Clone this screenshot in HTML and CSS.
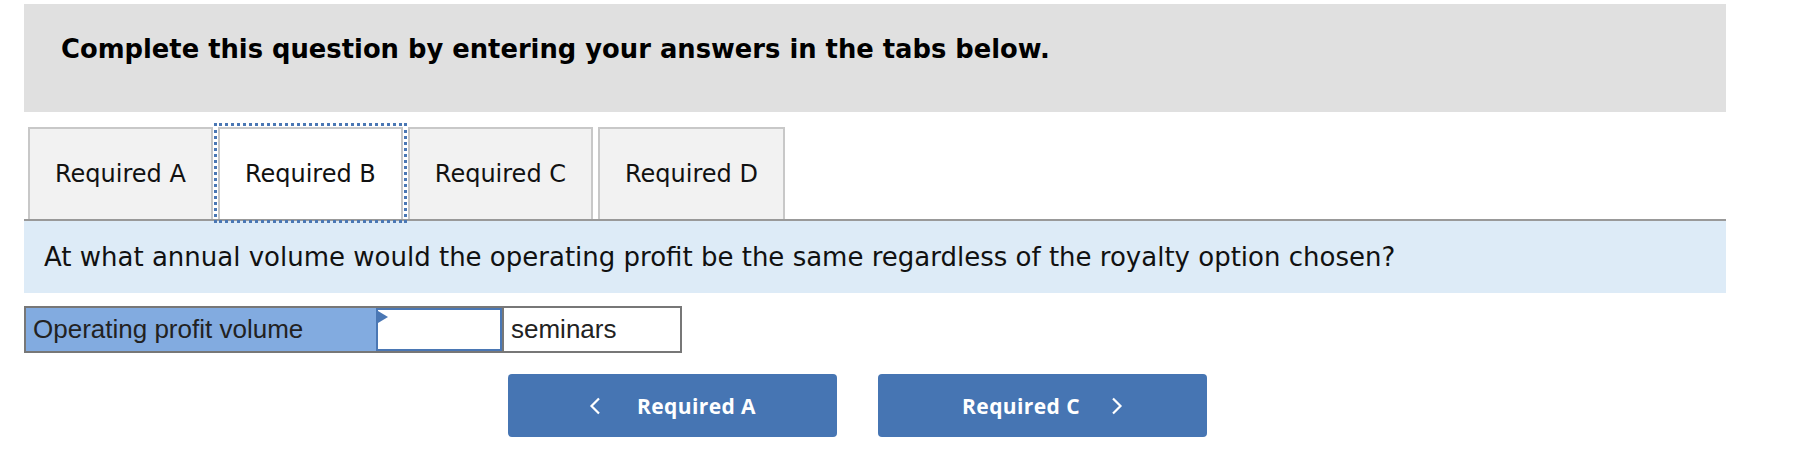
FILE: index.html
```html
<!DOCTYPE html>
<html lang="en">

<head>
    <meta charset="UTF-8">
    <meta name="viewport" content="width=device-width, initial-scale=1.0">
    <title>Required B</title>
    <link rel="stylesheet" href="styles.css">
</head>

<body>
    <div class="question-container">
        <div class="instructions">Complete this question by entering your answers in the tabs below.</div>

        <div class="tabs">
            <button class="tab">Required A</button>
            <button class="tab active">Required B</button>
            <button class="tab">Required C</button>
            <button class="tab">Required D</button>
        </div>

        <div class="prompt">At what annual volume would the operating profit be the same regardless of the royalty option chosen?</div>

        <div class="answer-row">
            <div class="answer-label">Operating profit volume</div>
            <div class="answer-input">
                <span class="flag"></span>
                <input type="text" aria-label="Operating profit volume">
            </div>
            <div class="answer-unit">seminars</div>
        </div>

        <div class="nav">
            <button class="nav-btn prev">
                <svg width="12" height="18" viewBox="0 0 12 18"><polyline points="10,1.5 2.5,9 10,16.5" /></svg>
                <span>Required A</span>
            </button>
            <button class="nav-btn next">
                <span>Required C</span>
                <svg width="12" height="18" viewBox="0 0 12 18"><polyline points="2,1.5 9.5,9 2,16.5" /></svg>
            </button>
        </div>
    </div>
</body>

</html>
```

FILE: styles.css
```css
body {
    margin: 0;
    padding: 4px 0 0 24px;
    background: #fff;
    font-family: "DejaVu Sans", Verdana, sans-serif;
    color: #111;
}

.question-container {
    width: 1702px;
}

.instructions {
    background-color: #e0e0e0;
    height: 108px;
    box-sizing: border-box;
    padding: 30px 37px 0;
    font-size: 25.8px;
    font-weight: bold;
    color: #000;
}

.tabs {
    display: flex;
    margin-top: 15px;
    padding-left: 4px;
    border-bottom: 2px solid #999;
}

.tab {
    height: 92px;
    box-sizing: border-box;
    padding: 0 25px;
    margin-right: 5px;
    background-color: #f2f2f2;
    border: 2px solid #c8c8c8;
    border-bottom: none;
    font-family: "DejaVu Sans", Verdana, sans-serif;
    font-size: 24px;
    color: #111;
    cursor: pointer;
}

.tab.active {
    background-color: #fff;
    outline: 3px dotted #4a77b4;
    outline-offset: 1px;
}

.prompt {
    background-color: #ddebf7;
    height: 72px;
    box-sizing: border-box;
    padding-left: 20px;
    display: flex;
    align-items: center;
    font-size: 26px;
}

.answer-row {
    display: flex;
    width: 658px;
    height: 47px;
    box-sizing: border-box;
    margin-top: 13px;
    border: 2px solid #777;
    font-family: "Liberation Sans", Arial, sans-serif;
    font-size: 26px;
    color: #222;
}

.answer-label {
    width: 350px;
    background-color: #82abe0;
    padding-left: 7px;
    box-sizing: border-box;
    display: flex;
    align-items: center;
}

.answer-input {
    position: relative;
    width: 126px;
    border: 2px solid #4a77b4;
    box-sizing: border-box;
}

.answer-input input {
    width: 100%;
    height: 100%;
    border: none;
    padding: 0 6px;
    box-sizing: border-box;
    font-family: "Liberation Sans", Arial, sans-serif;
    font-size: 26px;
    outline: none;
}

.answer-input .flag {
    position: absolute;
    left: 0;
    top: 1px;
    width: 0;
    height: 0;
    border-top: 6px solid transparent;
    border-bottom: 6px solid transparent;
    border-left: 10px solid #4a77b4;
}

.answer-unit {
    flex: 1;
    border-left: 2px solid #777;
    padding-left: 7px;
    display: flex;
    align-items: center;
}

.nav {
    display: flex;
    gap: 41px;
    margin-top: 21px;
    padding-left: 484px;
}

.nav-btn {
    width: 329px;
    height: 63px;
    display: flex;
    align-items: center;
    justify-content: center;
    background-color: #4675b3;
    border: none;
    border-radius: 4px;
    color: #fff;
    font-family: "Open Sans", Roboto, sans-serif;
    font-size: 21px;
    font-weight: bold;
    letter-spacing: 0.4px;
    cursor: pointer;
}

.nav-btn.prev {
    gap: 36px;
}

.nav-btn.next {
    gap: 31px;
}

.nav-btn svg polyline {
    fill: none;
    stroke: #fff;
    stroke-width: 2.2;
}
```
